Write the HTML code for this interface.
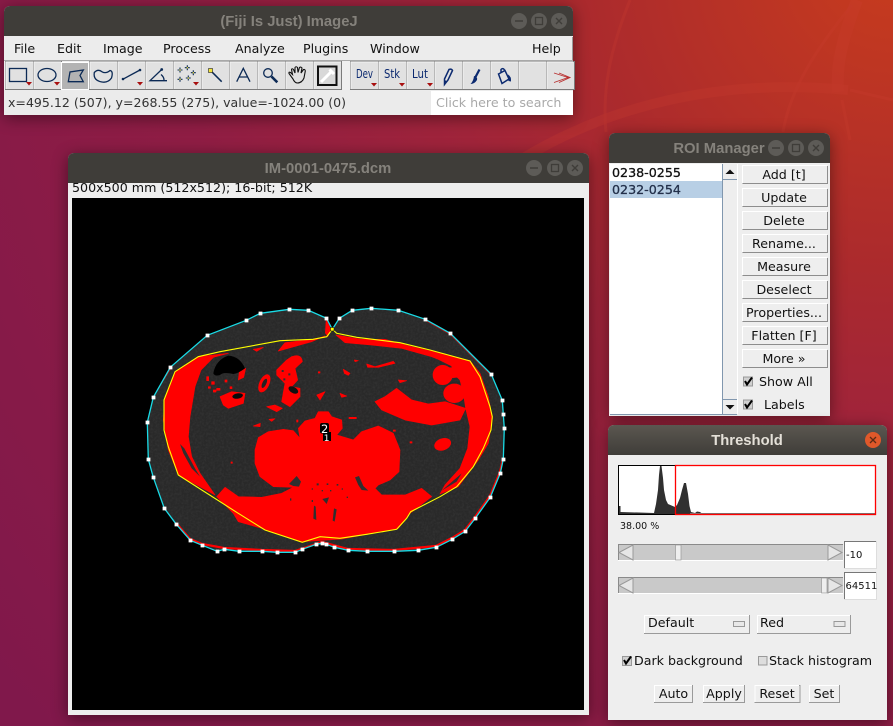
<!DOCTYPE html>
<html><head><meta charset="utf-8"><style>
html,body{margin:0;padding:0;width:893px;height:726px;overflow:hidden}
body{position:relative;background:radial-gradient(circle at 893px -40px,#c83c1d 0,#ab2a2d 310px,#a0243a 460px,#8f1d44 720px,#80184b 1150px)}
.w{position:absolute;background:#eee;box-shadow:0 3px 16px rgba(0,0,0,.45);border-radius:6px 6px 0 0}
svg{position:absolute;left:0;top:0}
text{font-family:"DejaVu Sans",sans-serif;font-size:12.65px;fill:#111}
.t{font-family:"Liberation Sans",sans-serif;font-weight:bold;font-size:14.8px;fill:#85827c;text-anchor:middle}
.c{text-anchor:middle}
.i{fill:none;stroke:#0c2a55;stroke-width:1.3}
.r{fill:#a80f0f}
</style></head><body>
<svg width="893" height="726" style="opacity:.5"><g fill="none" stroke="#c93d30" stroke-opacity=".5">
<path d="M520 160C610 105 720 78 848 90" stroke-width="10"/>
<path d="M857 0C842 40 836 65 838 92" stroke-width="12"/>
<path d="M842 100C845 115 848 130 850 140M850 90L893 100" stroke-width="3"/>
<path d="M630 0C610 50 602 90 606 132" stroke-width="3"/>
<path d="M852 5C815 50 790 90 783 132" stroke-width="3"/></g></svg>
<div class="w" style="left:4px;top:6px;width:569px;height:109px"></div>
<div class="w" style="left:68px;top:153px;width:521px;height:562px"></div>
<div class="w" style="left:609px;top:133px;width:221px;height:283px"></div>
<div class="w" style="left:608px;top:425px;width:279px;height:295px"></div>
<svg width="893" height="726" viewBox="0 0 893 726">
<defs>
<linearGradient id="tg" x1="0" y1="0" x2="0" y2="1"><stop offset="0" stop-color="#5b5750"/><stop offset="1" stop-color="#3f3d39"/></linearGradient>
<filter id="nz" x="0" y="0" width="100%" height="100%"><feTurbulence type="fractalNoise" baseFrequency=".45" numOctaves="2" seed="4"/><feColorMatrix values="0 0 0 0 .5 0 0 0 0 .5 0 0 0 0 .5 .6 0 0 0 -.2"/></filter>
<clipPath id="bd"><path id="bp" d="M147.3 422.3L153.3 397.3L170.3 367.3L207.3 335.3L246.3 320.3L260.3 313.3L289.3 309.3L308.3 310.3L326.5 318.3L332.3 329.3L339.3 318.3L352.3 310.3L371.3 308.3L398.3 310.3L425.3 319.3L450.3 333.3L491.3 374.3L502.3 400.3L503.3 414.3L504.3 428.3L503.3 459.3L500.3 473.3L490.3 497.3L475.3 518.3L465.3 531.3L452.3 539.3L436.3 547.3L418.3 550.3L394.3 551.3L367.3 551.3L348.3 550.3L334.3 547.3L326.3 544.3L322.3 543.3L316.3 544.3L302.3 549.3L295.3 552.3L277.3 552.3L262.3 551.3L239.3 551.3L224.3 549.3L217.3 551.3L202.3 545.3L190.3 540.3L176.3 524.3L164.3 508.3L153.3 477.3L148.3 459.3Z"/></clipPath>
</defs>

<!-- MAIN WINDOW -->
<path d="M4 36V12a6 6 0 0 1 6-6h557a6 6 0 0 1 6 6v24z" fill="#3f3d39"/>
<text class="t" x="289" y="26">(Fiji Is Just) ImageJ</text>
<g fill="#5d5b57"><circle cx="519" cy="21" r="8"/><circle cx="539" cy="21" r="8"/><circle cx="559" cy="21" r="8"/></g>
<path d="M515 21h8" stroke="#3f3d39" stroke-width="1.5"/><rect x="535.5" y="17.5" width="7" height="7" fill="none" stroke="#3f3d39" stroke-width="1.3"/><path d="M556 18l6 6m0-6l-6 6" stroke="#3f3d39" stroke-width="1.4"/>
<rect x="4" y="36" width="569" height="25" fill="#ececec"/>
<path d="M4 60.5H573" stroke="#a8a8a8"/><path d="M572.5 37V60" stroke="#999"/>
<g><text x="14" y="53">File</text><text x="57" y="53">Edit</text><text x="103" y="53">Image</text><text x="163" y="53">Process</text><text x="235" y="53">Analyze</text><text x="303" y="53">Plugins</text><text x="370" y="53">Window</text><text x="532" y="53">Help</text></g>
<rect x="4" y="61" width="569" height="29" fill="#efefef"/>
<g fill="#e1e1e1" stroke="#7b7b7b"><rect x="5.500" y="61.500" width="28" height="28"/><rect x="33.500" y="61.500" width="28" height="28"/><rect x="89.500" y="61.500" width="28" height="28"/><rect x="117.500" y="61.500" width="28" height="28"/><rect x="145.500" y="61.500" width="28" height="28"/><rect x="173.500" y="61.500" width="28" height="28"/><rect x="201.500" y="61.500" width="28" height="28"/><rect x="229.500" y="61.500" width="28" height="28"/><rect x="257.500" y="61.500" width="28" height="28"/><rect x="285.500" y="61.500" width="28" height="28"/><rect x="313.500" y="61.500" width="28" height="28"/><rect x="350.500" y="61.500" width="28" height="28"/><rect x="378.500" y="61.500" width="28" height="28"/><rect x="406.500" y="61.500" width="28" height="28"/><rect x="434.500" y="61.500" width="28" height="28"/><rect x="462.500" y="61.500" width="28" height="28"/><rect x="490.500" y="61.500" width="28" height="28"/><rect x="518.500" y="61.500" width="28" height="28"/><rect x="546.500" y="61.500" width="28" height="28"/></g>
<path fill="none" stroke="#f4f4f4" d="M6 89V62H33M34 89V62H61M90 89V62H117M118 89V62H145M146 89V62H173M174 89V62H201M202 89V62H229M230 89V62H257M258 89V62H285M286 89V62H313M314 89V62H341M351 89V62H378M379 89V62H406M407 89V62H434M435 89V62H462M463 89V62H490M491 89V62H518M519 89V62H546M547 89V62H573"/>
<rect x="61.500" y="62.500" width="27" height="27" fill="#b3b3b3" stroke="#fff"/>
<!-- icons -->
<rect x="9.500" y="68.500" width="17" height="13" class="i"/><path class="r" d="M26 82h6l-3 3.5z"/>
<ellipse cx="47" cy="75" rx="9" ry="6.5" class="i"/><path class="r" d="M54 82h6l-3 3.5z"/>
<path class="i" d="M68.300 81.700L70 72L83.300 70L80 75.500L83.300 81.700z"/>
<path class="i" d="M94.300 72.500Q98 68.500 102 71.800Q106 74 110 70.500Q113.500 71 111.500 78Q108 83 102 82Q93 80.500 94.300 72.500z"/>
<path class="i" d="M122.700 79.300L140 70"/><circle cx="123" cy="79" r="1.300" fill="#0c2a55"/><circle cx="140" cy="70" r="1.300" fill="#0c2a55"/><path class="r" d="M137 82h6l-3 3.500z"/>
<path class="i" d="M161.700 69.500L150 80.700H167M161 74.500Q164 77 164 80"/><circle cx="161.700" cy="69.500" r="1.400" fill="#0c2a55"/>
<g stroke="#0c2a55" stroke-width="1.100"><path d="M177.500 70h5M180 67.500v5M184.800 67.700h5M187.300 65.200v5M190.800 72.700h5M193.300 70.200v5M177.500 79.300h5M180 76.800v5M185.800 78h5M188.300 75.500v5"/></g>
<g fill="#f2e33a"><rect x="179.400" y="69.400" width="1.300" height="1.300"/><rect x="186.700" y="67.100" width="1.300" height="1.300"/><rect x="192.700" y="72.100" width="1.300" height="1.300"/><rect x="179.400" y="78.700" width="1.300" height="1.300"/><rect x="187.700" y="77.400" width="1.300" height="1.300"/></g>
<path class="r" d="M193 82h6l-3 3.500z"/>
<path d="M211.700 71.700L221.700 81.700" stroke="#0c2a55" stroke-width="1.500"/><rect x="208.500" y="68.500" width="4" height="4" fill="#f2e33a" stroke="#222" stroke-width=".6"/>
<path class="i" d="M236.700 81.700L243.300 68.300L250 81.700M239 77H247.500"/>
<circle cx="268" cy="73" r="4.300" class="i"/><path d="M271.500 76.500L277.300 82.300" stroke="#0c2a55" stroke-width="2.600"/>
<path class="i" style="stroke-width:1.100;stroke:#111" d="M293 79L289 73.500Q288.500 71.500 290.500 72.500L292.500 74.500L291.500 69.500Q292 68 293.500 69.500L295 73L295 67.500Q296 66 297.500 67.500L298 72.500L299.500 67.500Q301 66.500 302 68L301 73L303.500 69.500Q305 69 305.300 71L304 78Q302 83 297 83Q294.500 82.500 293 79z"/>
<rect x="318" y="66.500" width="18.500" height="18.500" fill="#d8d8d8" stroke="#111" stroke-width="2"/>
<path d="M321 82L331 72" stroke="#fff" stroke-width="3"/><path d="M329.500 69.500l4.500 4.500" stroke="#fff" stroke-width="3"/>
<g><text x="356" y="78" textLength="17" lengthAdjust="spacingAndGlyphs" style="fill:#0c2a70;font-size:12.500px">Dev</text><text x="384" y="78" textLength="16" lengthAdjust="spacingAndGlyphs" style="fill:#0c2a70;font-size:12.500px">Stk</text><text x="412" y="78" textLength="16" lengthAdjust="spacingAndGlyphs" style="fill:#0c2a70;font-size:12.500px">Lut</text></g>
<path class="r" d="M371 83h6l-3 3.500zM399 83h6l-3 3.500zM427 83h6l-3 3.500z"/>
<path class="i" style="stroke:#0c2a70;stroke-width:1.500" d="M444.500 79L449 69.500Q451.500 68.500 452.500 70.500L448 80L444.500 84.500z"/><path d="M444.500 80l3 1.500-3 3z" fill="#0c2a70"/>
<path d="M479.500 69.500L475.500 77" stroke="#0c2a70" stroke-width="2.200"/><path d="M474 76Q478 77 477 80Q474.500 84 470.500 84Q473.500 81 474 76z" fill="#0c2a70"/>
<path class="i" style="stroke:#0c2a70;stroke-width:1.500" d="M498.500 74L505 70.500L509 79L502 83.500zM501 72.500V69.500Q503 67.500 504.500 70"/><path d="M508 74.500q3.500 2 3 7l-2.500-.5z" fill="#0c2a70"/>
<path d="M554 73L568 77.500L554 82.500M559 73L570 77.500L559 82.500" fill="none" stroke="#b83030" stroke-width=".9"/>
<rect x="4" y="90" width="569" height="25" fill="#ebebeb"/>
<text x="8" y="107" style="fill:#333;font-size:12.55px">x=495.12 (507), y=268.55 (275), value=-1024.00 (0)</text>
<rect x="431" y="91" width="142" height="24" fill="#fff"/>
<text x="436" y="107" style="fill:#a9a9a9">Click here to search</text>

<!-- IMAGE WINDOW -->
<path d="M68 183V159a6 6 0 0 1 6-6h509a6 6 0 0 1 6 6v24z" fill="#3f3d39"/>
<text class="t" x="328" y="173">IM-0001-0475.dcm</text>
<g fill="#5d5b57"><circle cx="534" cy="168" r="8"/><circle cx="555" cy="168" r="8"/><circle cx="575" cy="168" r="8"/></g>
<path d="M530 168h8" stroke="#3f3d39" stroke-width="1.500"/><rect x="551.500" y="164.500" width="7" height="7" fill="none" stroke="#3f3d39" stroke-width="1.300"/><path d="M572 165l6 6m0-6l-6 6" stroke="#3f3d39" stroke-width="1.400"/>
<text x="72" y="192">500x500 mm (512x512); 16-bit; 512K</text>
<rect x="72" y="198" width="512" height="512" fill="#000"/>
<!-- CT -->
<use href="#bp" fill="#292929"/>
<g clip-path="url(#bd)">
<rect x="145" y="305" width="362" height="250" filter="url(#nz)" opacity=".22"/>
<!-- rim -->
<path d="M176 523L190 539L202 544L224 548L262 550L295 551L322 542L348 549L394 550L436 546L452 538L465 530L475 517L490 496L500 472L503 459" fill="none" stroke="#f00" stroke-width="2.200"/>
<path d="M425 320L450 334L491 375M171 368L160 385M148 460L153 478" fill="none" stroke="#f00" stroke-width="1.400" opacity=".6"/>
<path d="M326 318L331 329L328 337L325 333z" fill="#f00"/>
<g transform="translate(145 340) scale(.33333)" fill="#f00" stroke="#f00" stroke-width="2" stroke-linejoin="round">
<!-- left wall -->
<path d="M55 240L60 175L92 95L160 50L250 40L205 52L168 90L150 140L135 230L130 290L140 350L165 400L210 465L100 405L70 330z"/>
<!-- bands -->
<path d="M400 33L420 8L515 -3L540 -12L500 5L440 22z"/>
<path d="M573 -15L650 -2L720 -2L800 20L880 38L975 62L1005 100L1030 170L1042 235L1030 310L1000 360L940 440L885 462L900 435L945 385L968 325L975 260L962 205L955 160L945 120L925 100L920 78L880 58L860 50L770 25L680 15L600 8z"/>
<circle cx="893" cy="105" r="29"/>
<path d="M900 82L935 85L935 112L900 115z"/>
<ellipse cx="928" cy="160" rx="32" ry="28"/>
<!-- bowel -->
<path d="M690 185L720 170L755 145L800 180L850 192L900 185L962 205L945 240L860 255L780 240L710 210z"/>
<ellipse cx="893" cy="313" rx="25" ry="17" transform="rotate(-20 893 313)"/>
<!-- centre + back -->
<path d="M340 293L370 275L415 268L445 272L465 295L460 265L480 243L510 235L520 215H550L560 230L590 240L592 265L575 285L625 300L650 275L700 258L745 280L765 330L762 395L735 420L700 435L690 445L710 465L780 465L830 445L860 470L795 520L760 565L590 597L470 605L350 565L280 545L265 520L215 470L240 442L280 470L350 472L410 460L445 442L385 440L345 410L330 370L330 330z"/>
<!-- stomach reds -->
<path d="M225 170L260 155L300 160L295 190L250 205L235 195z"/>
<path d="M283 95L302 85L296 112L280 120z"/>
<!-- ring -->
<ellipse cx="358" cy="130" rx="14" ry="28" transform="rotate(25 358 130)"/>
<!-- mid blob -->
<path d="M395 90L425 60L440 50Q470 40 472 65L450 85L458 120L440 140L465 145L465 170L435 200L410 185L420 130L395 105z"/>
<!-- small -->
<path d="M365 200L390 195L412 205L395 215z"/><path d="M515 165L540 155L525 180z"/><path d="M595 88L615 100L610 106L598 100z"/><path d="M585 160L605 168L590 172z"/><path d="M325 258L346 250L345 260z"/><path d="M372 238L390 236L380 244z"/><path d="M665 72L690 80L745 64L750 70L700 82L668 82z"/><path d="M760 120L785 122L765 128z"/><path d="M628 60L640 62L630 65z"/><path d="M325 28L355 22L335 34z"/><path d="M740 162L760 152L745 172z"/><path d="M612 232h22v4h-22z"/><path d="M200 125h8v8h-8zM185 110h6v12h-6zM215 145h10v6h-10zM240 120h6v6h-6zM205 150h8v6h-8zM190 140h6v5h-6zM255 140h6v6h-6zM520 95h5v4h-5zM258 366h4v4h-4zM795 305h6v4h-6zM745 270h6v4h-6zM455 240h4v6h-4z"/>
</g>
<g transform="translate(145 340) scale(.33333)">
<!-- gas -->
<path d="M205 100Q212 60 250 47Q285 50 300 85Q280 100 265 102Q235 95 225 105Q210 110 205 100z" fill="#000"/>
<ellipse cx="278" cy="168" rx="16" ry="8" transform="rotate(-10 278 168)" fill="#0a0a0a"/>
<ellipse cx="358" cy="130" rx="6" ry="15" transform="rotate(25 358 130)" fill="#222"/>
<ellipse cx="445" cy="150" rx="16" ry="9" transform="rotate(30 445 150)" fill="#111"/>
<g fill="#2f2f2f">
<path d="M432 432L455 408L468 425L462 440L445 438z"/>
<path d="M630 412L642 408L655 438L670 452L650 450L640 435z"/>
<path d="M532 477L552 472L545 492z"/>
<path d="M507 497L512 500L514 540L505 536z"/>
<path d="M567 505L575 508L569 545L563 542z"/>
<path d="M515 430h6v6h-6zM545 430h5v5h-5zM575 432h5v5h-5zM530 450h4v4h-4zM500 445h4v4h-4zM555 450h4v4h-4zM590 445h4v4h-4zM605 470h4v4h-4zM435 475h4v7h-4zM500 480h4v6h-4z"/>
<path d="M105 312L118 325L150 385L165 410L140 385L115 340z"/>
<path d="M890 452L950 400L935 425z"/>
<path d="M410 90h6v6h-6zM430 100h6v6h-6zM415 115h6v6h-6z"/>
</g>
</g>
</g>
<path d="M147.300 422.300L153.300 397.300L170.300 367.300L207.300 335.300L246.300 320.300L260.300 313.300L289.300 309.300L308.300 310.300L326.500 318.300L332.300 329.300L339.300 318.300L352.300 310.300L371.300 308.300L398.300 310.300L425.300 319.300L450.300 333.300L491.300 374.300L502.300 400.300L503.300 414.300L504.300 428.300L503.300 459.300L500.300 473.300L490.300 497.300L475.300 518.300L465.300 531.300L452.300 539.300L436.300 547.300L418.300 550.300L394.300 551.300L367.300 551.300L348.300 550.300L334.300 547.300L326.300 544.300L322.300 543.300L316.300 544.300L302.300 549.300L295.300 552.300L277.300 552.300L262.300 551.300L239.300 551.300L224.300 549.300L217.300 551.300L202.300 545.300L190.300 540.300L176.300 524.300L164.300 508.300L153.300 477.300L148.300 459.300Z" fill="none" stroke="#19dbe6" stroke-width="1.300"/>
<path d="M164 430V400L175 371.700L198.300 356.700L220 351.700L280 340.700L313 339.300L326.700 336.700L332.300 329.300L336.700 333.300L356.700 337.300L400 342.700L430 350L470 361L480 376.700L490 406.700L492.300 416.700L491 430L483.300 448.300L473.300 466.700L456.700 486.700L440 496.700L410.700 511.700L406.700 518.300L396.700 529.300L366.700 534.300L340 538.300L320 536.700L302.300 542.300L265 530L236.700 512.300L178.300 475L168.300 446.700z" fill="none" stroke="#ffff00" stroke-width="1.100"/>
<path fill="#fff" stroke="#fff" stroke-width=".8" d="M146 421h3v3h-3zM152 396h3v3h-3zM169 366h3v3h-3zM206 334h3v3h-3zM245 319h3v3h-3zM259 312h3v3h-3zM288 308h3v3h-3zM307 309h3v3h-3zM325 317h3v3h-3zM338 317h3v3h-3zM351 309h3v3h-3zM370 307h3v3h-3zM397 309h3v3h-3zM424 318h3v3h-3zM449 332h3v3h-3zM490 373h3v3h-3zM501 399h3v3h-3zM502 413h3v3h-3zM503 427h3v3h-3zM502 458h3v3h-3zM499 472h3v3h-3zM489 496h3v3h-3zM474 517h3v3h-3zM464 530h3v3h-3zM451 538h3v3h-3zM435 546h3v3h-3zM417 549h3v3h-3zM393 550h3v3h-3zM366 550h3v3h-3zM347 549h3v3h-3zM333 546h3v3h-3zM325 543h3v3h-3zM321 542h3v3h-3zM315 543h3v3h-3zM301 548h3v3h-3zM294 551h3v3h-3zM276 551h3v3h-3zM261 550h3v3h-3zM238 550h3v3h-3zM223 548h3v3h-3zM216 550h3v3h-3zM201 544h3v3h-3zM189 539h3v3h-3zM175 523h3v3h-3zM163 507h3v3h-3zM152 476h3v3h-3zM147 458h3v3h-3z"/>
<rect x="330.500" y="327.500" width="3.500" height="3.500" fill="#ffff00" stroke="#000" stroke-width=".5"/>
<rect x="323" y="432" width="8" height="9" fill="#000"/>
<rect x="320" y="423" width="9" height="10.500" fill="#000" rx="2"/>
<text x="321" y="433" style="font-size:11.500px;fill:#fff">2</text>
<text x="323.800" y="441" style="font-size:9px;fill:#fff">1</text>

<!-- ROI MANAGER -->
<path d="M609 163V139a6 6 0 0 1 6-6h209a6 6 0 0 1 6 6v24z" fill="#3f3d39"/>
<text class="t" x="719" y="153">ROI Manager</text>
<g fill="#5d5b57"><circle cx="776" cy="148" r="8"/><circle cx="796" cy="148" r="8"/><circle cx="816" cy="148" r="8"/></g>
<path d="M772 148h8" stroke="#3f3d39" stroke-width="1.500"/><rect x="792.500" y="144.500" width="7" height="7" fill="none" stroke="#3f3d39" stroke-width="1.300"/><path d="M813 145l6 6m0-6l-6 6" stroke="#3f3d39" stroke-width="1.400"/>
<rect x="610" y="164" width="112" height="250" fill="#fff"/>
<path d="M610 414.500H737M722.500 164V414" stroke="#8197ae"/>
<rect x="610" y="181" width="112" height="17" fill="#b8cfe5"/>
<text x="612" y="177" style="stroke:#111;stroke-width:.3">0238-0255</text>
<text x="612" y="194" style="fill:#23304a;stroke:#23304a;stroke-width:.3">0232-0254</text>
<rect x="723" y="164" width="14" height="250" fill="#eee"/>
<path d="M737.500 164V414" stroke="#fff"/>
<path d="M723 179.500H737M723 399.500H737" stroke="#8197ae"/>
<path d="M725.500 174L730 169.500L734.500 174z" fill="#111"/><path d="M725.500 405L730 409.500L734.500 405z" fill="#111"/>
<g fill="#eee" stroke="#8d8d8d"><path d="M742.500 183.500H827.500V166"/><path d="M742.500 206.500H827.500V189"/><path d="M742.500 229.500H827.500V212"/><path d="M742.500 252.500H827.500V235"/><path d="M742.500 275.500H827.500V258"/><path d="M742.500 298.500H827.500V281"/><path d="M742.500 321.500H827.500V304"/><path d="M742.500 344.500H827.500V327"/><path d="M742.500 367.500H827.500V350"/></g>
<g fill="none" stroke="#fff"><path d="M742.500 183V165.500H827"/><path d="M742.500 206V188.500H827"/><path d="M742.500 229V211.500H827"/><path d="M742.500 252V234.500H827"/><path d="M742.500 275V257.500H827"/><path d="M742.500 298V280.500H827"/><path d="M742.500 321V303.500H827"/><path d="M742.500 344V326.500H827"/><path d="M742.500 367V349.500H827"/></g>
<g><text class="c" x="784" y="179">Add [t]</text><text class="c" x="784" y="202">Update</text><text class="c" x="784" y="225">Delete</text><text class="c" x="784" y="248">Rename...</text><text class="c" x="784" y="271">Measure</text><text class="c" x="784" y="294">Deselect</text><text class="c" x="784" y="317">Properties...</text><text class="c" x="784" y="340">Flatten [F]</text><text class="c" x="784" y="363">More »</text></g>
<rect x="743.500" y="377" width="9" height="9" fill="#d0d0d0" stroke="#999"/><path d="M745 381l2 3.500l5-7" fill="none" stroke="#000" stroke-width="2"/>
<rect x="743.500" y="400" width="9" height="9" fill="#d0d0d0" stroke="#999"/><path d="M745 404l2 3.500l5-7" fill="none" stroke="#000" stroke-width="2"/>
<text x="759" y="386">Show All</text><text x="764" y="409">Labels</text>

<!-- THRESHOLD -->
<path d="M608 455V431a6 6 0 0 1 6-6h267a6 6 0 0 1 6 6v24z" fill="url(#tg)"/>
<text class="t" x="747" y="445" style="fill:#e4e0d8">Threshold</text>
<circle cx="873" cy="440" r="8" fill="#e0582a"/><path d="M870 437l6 6m0-6l-6 6" stroke="#5c2a14" stroke-width="1.300"/>
<rect x="618.500" y="465.500" width="257" height="49" fill="#fff" stroke="#000"/>
<path d="M619 514V506H620.500V512L654 513L656 504L658 490L659 475L660 466L661.500 466L663 478L664 490L666 500L668 504L675 507L677 505L680 498L682 490L684 483L686 483L688 494L689.500 506L691 512L695 513L697 511.500L700 512L702 513.500V514z" fill="#303030"/>
<path d="M690 513.500H875" stroke="#777"/>
<rect x="675.500" y="465.500" width="200" height="49" fill="none" stroke="#f00" stroke-width="1.300"/>
<text x="620" y="529" style="font-size:9.500px">38.00 %</text>
<!-- sliders -->
<rect x="618" y="544" width="225" height="17" fill="#c9c9c9"/><path d="M618 544.500H843M618.500 544V561" stroke="#8a8a8a"/><path d="M618 560.500H843" stroke="#fff"/>
<path d="M633 545V560L619 552.500z" fill="#e6e6e6" stroke="#999"/><path d="M828 545V560L842 552.500z" fill="#e6e6e6" stroke="#999"/>
<rect x="675.500" y="545" width="5.500" height="15" fill="#eee" stroke="#999" stroke-width=".7"/>
<rect x="618" y="577" width="225" height="17" fill="#c9c9c9"/><path d="M618 577.500H843M618.500 577V594" stroke="#8a8a8a"/><path d="M618 593.500H843" stroke="#fff"/>
<path d="M633 578V593L619 585.500z" fill="#e6e6e6" stroke="#999"/><path d="M828 578V593L842 585.500z" fill="#e6e6e6" stroke="#999"/>
<rect x="821.500" y="578" width="5.500" height="15" fill="#eee" stroke="#999" stroke-width=".7"/>
<rect x="844.500" y="541.500" width="32" height="27" fill="#fff" stroke="#ddd"/><path d="M844.500 568V541.500H876" fill="none" stroke="#777"/>
<rect x="844.500" y="572.500" width="32" height="27" fill="#fff" stroke="#ddd"/><path d="M844.500 599V572.500H876" fill="none" stroke="#777"/>
<text x="846" y="558" style="font-size:10px">-10</text><text x="845.500" y="589" style="font-size:10px">64511</text>
<!-- dropdowns -->
<rect x="644.500" y="615.500" width="105" height="18" fill="#eee" stroke="#9a9a9a"/><path d="M644.500 633V615.500H749" fill="none" stroke="#fff"/>
<rect x="757.500" y="615.500" width="93" height="18" fill="#eee" stroke="#9a9a9a"/><path d="M757.500 633V615.500H850" fill="none" stroke="#fff"/>
<rect x="733.500" y="621.500" width="11" height="5" fill="#e8e8e8" stroke="#999"/><rect x="834" y="621.500" width="11" height="5" fill="#e8e8e8" stroke="#999"/>
<text x="648" y="627">Default</text><text x="760" y="627">Red</text>
<rect x="622.500" y="656.500" width="9" height="9" fill="#d0d0d0" stroke="#999"/><path d="M624 660l2 3.500l5-7" fill="none" stroke="#000" stroke-width="2"/>
<rect x="758.500" y="656.500" width="8.500" height="8.500" fill="#ddd" stroke="#999"/>
<text x="634" y="665">Dark background</text><text x="769" y="665">Stack histogram</text>
<g fill="#eee" stroke="#9a9a9a"><rect x="654.500" y="685.500" width="38" height="17"/><rect x="703.500" y="685.500" width="41" height="17"/><rect x="755" y="685.500" width="45" height="17"/><rect x="809.500" y="685.500" width="30" height="17"/></g>
<g fill="none" stroke="#fff"><path d="M654.500 702V685.500H692"/><path d="M703.500 702V685.500H744"/><path d="M755 702V685.500H799"/><path d="M809.500 702V685.500H839"/></g>
<text class="c" x="673.500" y="698">Auto</text><text class="c" x="724" y="698">Apply</text><text class="c" x="777" y="698">Reset</text><text class="c" x="824" y="698">Set</text>
</svg>
</body></html>
